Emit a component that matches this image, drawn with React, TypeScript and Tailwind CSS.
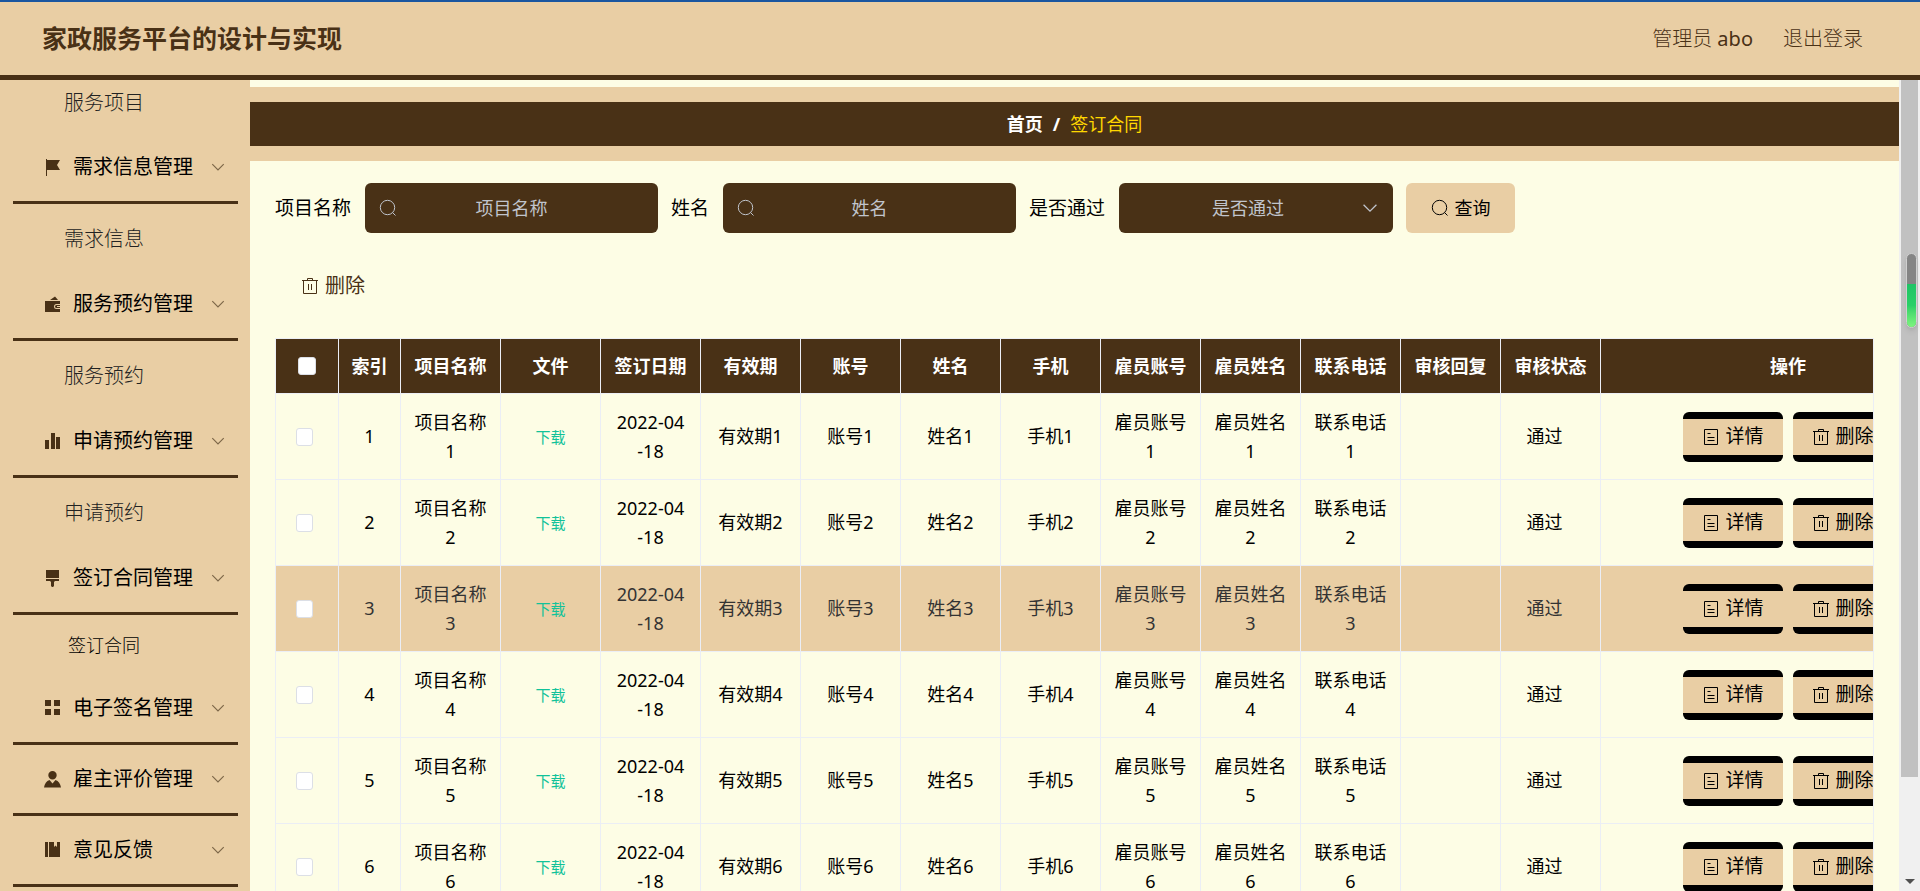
import type { ReactNode } from 'react'

type MenuGroup = { title: string; icon: ReactNode; sub?: string; active?: boolean }

const groups: MenuGroup[] = [
  {
    title: '需求信息管理',
    sub: '需求信息',
    icon: <path d="M1 0h1v17H1zM2 1h13l-3 5 3 5H2z" />,
  },
  {
    title: '服务预约管理',
    sub: '服务预约',
    icon: (
      <path
        fillRule="evenodd"
        d="M0 5h15v3h-3.500a2.500 2.500 0 0 0 0 5H15v3H0zM5 4l5-3.500L13 4zM11.500 9H15v1h-3v1h3v1h-3.500a1.500 1.500 0 0 1 0-3z"
      />
    ),
  },
  {
    title: '申请预约管理',
    sub: '申请预约',
    icon: <path d="M0 7h4v9H0zM6 0h4v16H6zM11 4h4v12h-4z" />,
  },
  {
    title: '签订合同管理',
    sub: '签订合同',
    active: true,
    icon: <path d="M1 0h13v8H1zM1 9h13v2h-4l-1 1v4l-1 1H7l-1-1v-4l-1-1H1z" />,
  },
  {
    title: '电子签名管理',
    icon: <path d="M0 0h6v6H0zM9 0h6v6H9zM0 9h6v6H0zM9 9h6v6H9z" />,
  },
  {
    title: '雇主评价管理',
    icon: (
      <path d="M7.500 0a4.200 4.200 0 1 1 0 8.400a4.200 4.200 0 0 1 0-8.400zM4.500 9l3 3.500 3-3.500c3 1 5 4 5.500 7.500H-1C-.5 13 1.500 10 4.500 9z" />
    ),
  },
  {
    title: '意见反馈',
    icon: <path d="M0 0h3v15H0zM4 0h5v5l1.500-1.500L12 5V0h3v15H4z" />,
  },
]

const headers = [
  '索引',
  '项目名称',
  '文件',
  '签订日期',
  '有效期',
  '账号',
  '姓名',
  '手机',
  '雇员账号',
  '雇员姓名',
  '联系电话',
  '审核回复',
  '审核状态',
]

const rows = [1, 2, 3, 4, 5, 6, 7]

function SearchIcon({ className }: { className: string }) {
  return (
    <svg viewBox="0 0 18 18" fill="none" stroke="currentColor" className={className} aria-hidden="true">
      <circle cx="8.500" cy="8.500" r="7.200" />
      <path d="M13.500 13.500l3 3" />
    </svg>
  )
}

function ChevronIcon({ className }: { className: string }) {
  return (
    <svg viewBox="0 0 14 14" fill="none" stroke="currentColor" className={className} aria-hidden="true">
      <path d="M2 4.500l5 5 5-5" />
    </svg>
  )
}

function TrashIcon() {
  return (
    <svg viewBox="0 0 18 18" fill="none" stroke="currentColor" className="h-[18px] w-[18px]" aria-hidden="true">
      <path d="M1 3.500h16M6.500 3V1.500h5V3M2.500 4v12.500h13V4M7.500 7v6M10.500 7v6" />
    </svg>
  )
}

function DetailIcon() {
  return (
    <svg viewBox="0 0 18 18" fill="none" stroke="currentColor" className="h-[18px] w-[18px]" aria-hidden="true">
      <path d="M2.500 1.500h13v15h-13zM5.500 5.500h3M5.500 9.500h7M5.500 12.500h7" />
    </svg>
  )
}

function Header() {
  return (
    <header className="flex h-20 shrink-0 items-center justify-between border-t-2 border-b-[5px] border-t-[#1a56a0] border-b-[#493116] bg-[#e9cea4] pr-[57px] pb-[2px] pl-[42px] text-[#493116]">
      <h1 className="text-[25px] leading-8 font-bold">家政服务平台的设计与实现</h1>
      <div className="flex items-center gap-[30px] pt-[2px] text-xl">
        <span>
          <span className="font-light">管理员</span> abo
        </span>
        <a href="#logout" className="font-light">
          退出登录
        </a>
      </div>
    </header>
  )
}

function Sidebar() {
  return (
    <nav className="w-[250px] shrink-0 overflow-hidden bg-[#e9cea4] pr-3 pl-[13px] text-xl">
      <a href="#item" className="mb-2 flex h-[45px] items-center pl-[51px] font-light text-[#222]">
        服务项目
      </a>
      {groups.map(group => (
        <div key={group.title}>
          <button
            type="button"
            className="flex h-[71px] w-full items-center border-b-3 border-[#493116] pr-3 pl-[31px] text-left text-black"
          >
            <svg viewBox="-1 0 18 17" className="mr-[11px] h-[17px] w-[18px] text-[#493116]" fill="currentColor" aria-hidden="true">
              {group.icon}
            </svg>
            <span className="flex-1">{group.title}</span>
            <ChevronIcon className="h-4 w-4 text-[#7c6648]" />
          </button>
          {group.sub && (
            <a
              href="#item"
              className={
                group.active
                  ? 'flex h-[59px] items-center pl-[55px] text-lg font-light text-black'
                  : 'flex h-[66px] items-center pt-1 pl-[51px] font-light text-[#222]'
              }
            >
              {group.sub}
            </a>
          )}
        </div>
      ))}
    </nav>
  )
}

function SearchField({ id, label }: { id: string; label: string }) {
  return (
    <div className="flex items-center">
      <label htmlFor={id} className="mr-[14px] text-[19px]">
        {label}
      </label>
      <div className="relative">
        <SearchIcon className="absolute top-4 left-[14px] h-[18px] w-[18px] text-[#c0c4cc]" />
        <input
          id={id}
          type="text"
          placeholder={label}
          className="h-[50px] w-[293px] rounded-md bg-[#493116] px-9 text-center text-lg text-white placeholder:text-[#c0c4cc]"
        />
      </div>
    </div>
  )
}

function SearchForm() {
  return (
    <form className="flex items-center gap-[13px]">
      <SearchField id="project" label="项目名称" />
      <SearchField id="name" label="姓名" />
      <div className="flex items-center">
        <label htmlFor="passed" className="mr-[14px] text-[19px]">
          是否通过
        </label>
        <div className="relative">
          <select
            id="passed"
            className="h-[50px] w-[274px] appearance-none rounded-md bg-[#493116] pr-9 pl-5 text-center text-lg text-[#c0c4cc]"
          >
            <option>是否通过</option>
          </select>
          <ChevronIcon className="pointer-events-none absolute top-4 right-[14px] h-[18px] w-[18px] text-[#c0c4cc]" />
        </div>
      </div>
      <button type="button" className="flex h-[50px] w-[109px] items-center justify-center gap-[6px] rounded-md bg-[#e9cea4] text-lg">
        <SearchIcon className="h-[18px] w-[18px]" />
        查询
      </button>
    </form>
  )
}

function ActionButton({ icon, label }: { icon: ReactNode; label: string }) {
  return (
    <button
      type="button"
      className="flex h-[50px] w-[100px] items-center justify-center gap-[5px] rounded-md border-y-7 border-black bg-[#e9cea4] text-[19px] text-black"
    >
      {icon}
      {label}
    </button>
  )
}

function ContractTable() {
  const cell = 'border-r border-b border-[#ebeef5] px-3'

  return (
    <div className="overflow-hidden border-x border-t border-[#ebeef5]">
      <table className="w-[1700px] table-fixed border-separate border-spacing-0 text-center text-lg leading-[29px]">
        <colgroup>
          <col className="w-[63px]" />
          <col className="w-[62px]" />
          {headers.slice(1).map(header => (
            <col key={header} className="w-[100px]" />
          ))}
          <col className="w-[375px]" />
        </colgroup>
        <thead>
          <tr className="h-[55px] bg-[#493116] text-white">
            <th className={cell}>
              <input
                type="checkbox"
                aria-label="全选"
                className="mx-auto block h-[18px] w-[18px] appearance-none rounded-[3px] border border-[#dcdfe6] bg-white"
              />
            </th>
            {headers.map(header => (
              <th key={header} className="border-r border-b border-[#ebeef5] font-bold">
                {header}
              </th>
            ))}
            <th className={cell}>操作</th>
          </tr>
        </thead>
        <tbody>
          {rows.map(row => (
            <tr key={row} className={row === 3 ? 'h-[86px] bg-[#e9cea4] text-[#333]' : 'h-[86px] text-black'}>
              <td className="border-r border-b border-[#ebeef5] pr-[6px]">
                <input
                  type="checkbox"
                  aria-label={`${row}`}
                  className="mx-auto block h-[18px] w-[17px] appearance-none rounded-[3px] border border-[#dcdfe6] bg-white"
                />
              </td>
              <td className={cell}>{row}</td>
              <td className={cell}>项目名称{row}</td>
              <td className={cell}>
                <a href="#download" className="text-[15px] text-[#11c299]">
                  下载
                </a>
              </td>
              <td className={cell}>
                2022-04
                <wbr />
                <span className="whitespace-nowrap">-18</span>
              </td>
              <td className={cell}>有效期{row}</td>
              <td className={cell}>账号{row}</td>
              <td className={cell}>姓名{row}</td>
              <td className={cell}>手机{row}</td>
              <td className={cell}>雇员账号{row}</td>
              <td className={cell}>雇员姓名{row}</td>
              <td className={cell}>联系电话{row}</td>
              <td className={cell}></td>
              <td className="border-r border-b border-[#ebeef5] pr-3">通过</td>
              <td className={cell}>
                <div className="flex justify-center gap-[10px]">
                  <ActionButton icon={<DetailIcon />} label="详情" />
                  <ActionButton icon={<TrashIcon />} label="删除" />
                </div>
              </td>
            </tr>
          ))}
        </tbody>
      </table>
    </div>
  )
}

function Scrollbar() {
  return (
    <div className="relative flex w-[21px] shrink-0 flex-col items-center justify-between bg-[#f0f0f0]">
      <div className="h-[86%] w-[17px] bg-[#c1c1c1]"></div>
      <svg viewBox="0 0 10 6" className="mb-[6px] h-[6px] w-[10px]" aria-hidden="true">
        <path d="M0 0h10L5 5z" fill="#505050" />
      </svg>
      <div className="absolute top-[173px] right-[3px] flex h-[75px] w-[11px] flex-col overflow-hidden rounded-full border border-[#d0d0d0] bg-[#858585] pt-[30px] shadow-md">
        <div className="flex-1 bg-linear-to-b from-[#1fc466] via-[#2ad067] to-[#7df57f]"></div>
      </div>
    </div>
  )
}

export default function App() {
  return (
    <div className="flex h-screen flex-col overflow-hidden bg-[#fdfde5] font-['Noto_Sans','Noto_Sans_CJK_SC',sans-serif] text-black">
      <Header />
      <div className="flex min-h-0 flex-1">
        <Sidebar />
        <main className="min-w-0 flex-1 overflow-hidden pt-[7px]">
          <div className="bg-[#e9cea4] py-[15px]">
            <div className="flex h-11 items-center justify-center gap-[10px] bg-[#493116] text-lg">
              <a href="#home" className="font-bold text-white">
                首页
              </a>
              <span className="font-bold text-white">/</span>
              <span className="text-[#ffd700]">签订合同</span>
            </div>
          </div>
          <div className="px-[25px] pt-[22px]">
            <SearchForm />
            <button type="button" className="mt-7 mb-7 flex h-[49px] items-center gap-[6px] px-[26px] text-xl text-[#493116]">
              <TrashIcon />
              删除
            </button>
            <ContractTable />
          </div>
        </main>
        <Scrollbar />
      </div>
    </div>
  )
}
